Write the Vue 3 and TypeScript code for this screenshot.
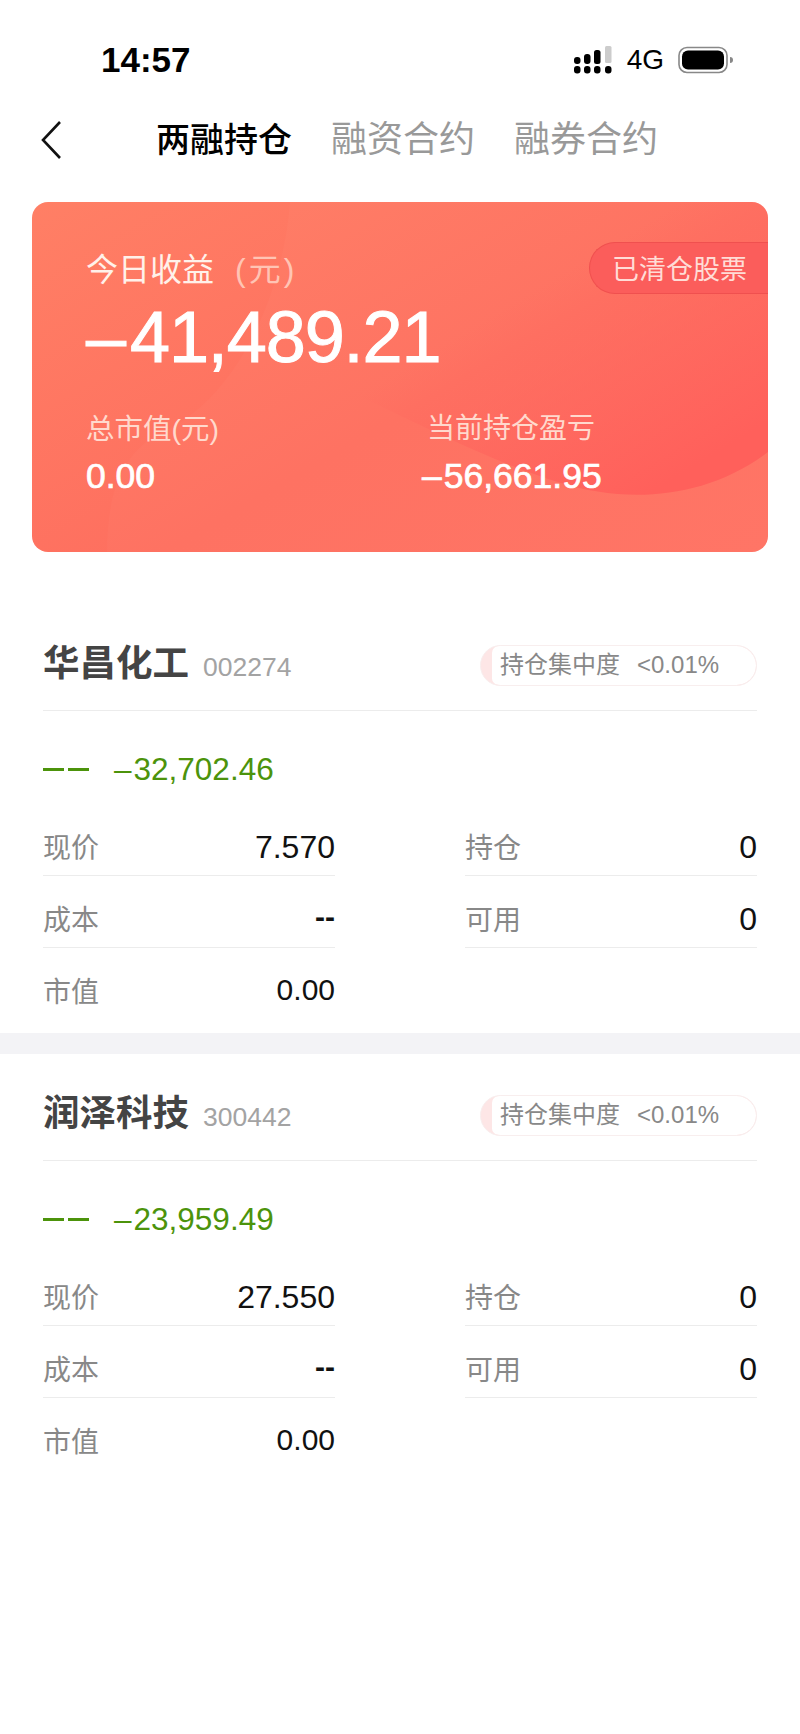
<script setup lang="ts">
interface Stock {
  name: string
  code: string
  pnl: string
  price: string
  marketValue: string
}

const tabs = ['两融持仓', '融资合约', '融券合约']

const stocks: Stock[] = [
  { name: '华昌化工', code: '002274', pnl: '32,702.46', price: '7.570', marketValue: '0.00' },
  { name: '润泽科技', code: '300442', pnl: '23,959.49', price: '27.550', marketValue: '0.00' },
]
</script>

<template>
  <div class="page">
    <div class="status-bar">
      <span class="time">14:57</span>
      <div class="status-right">
        <svg width="40" height="28" viewBox="0 0 40 28">
          <rect x="1" y="11" width="6.5" height="7" rx="3" fill="#000" />
          <rect x="11" y="8" width="6.5" height="10" rx="3" fill="#000" />
          <rect x="21" y="4" width="6.5" height="14" rx="2.5" fill="#000" />
          <rect x="32" y="0" width="6.5" height="17" rx="1.5" fill="#ccc" />
          <rect x="1" y="20" width="6.5" height="7.5" rx="3" fill="#000" />
          <rect x="11" y="20" width="6.5" height="7.5" rx="3" fill="#000" />
          <rect x="21" y="20" width="6.5" height="7.5" rx="3" fill="#000" />
          <rect x="32" y="20" width="6.5" height="7.5" rx="3" fill="#000" />
        </svg>
        <span class="net">4G</span>
        <svg width="56" height="28" viewBox="0 0 56 28">
          <rect x="1" y="1.5" width="48" height="25" rx="8" fill="none" stroke="#888" stroke-width="1.6" />
          <rect x="4" y="4.5" width="42" height="19" rx="6" fill="#000" />
          <path d="M52 11 a3 3 0 0 1 0 6z" fill="#888" />
        </svg>
      </div>
    </div>

    <div class="nav">
      <svg class="back" width="22" height="40" viewBox="0 0 22 40">
        <path d="M19 2 L2 20 L19 38" fill="none" stroke="#111" stroke-width="2.6" />
      </svg>
      <div class="tabs">
        <span v-for="(tab, i) in tabs" :key="tab" :class="['tab', { active: i === 0 }]">{{ tab }}</span>
      </div>
    </div>

    <div class="summary">
      <svg class="summary-bg" width="736" height="350" viewBox="0 0 736 350">
        <defs>
          <linearGradient id="blobFill" gradientUnits="userSpaceOnUse" x1="500" y1="90" x2="620" y2="290">
            <stop offset="0" stop-color="#ff605b" stop-opacity="0" />
            <stop offset="1" stop-color="#ff605b" />
          </linearGradient>
        </defs>
        <path d="M258 0 C250 100 200 200 130 230 C90 250 75 290 75 350 L736 350 L736 0 Z" fill="#fff" fill-opacity="0.025" />
        <path d="M270 170 C350 200 430 250 529 281 C590 300 670 300 736 250 L736 0 L300 0 Z" fill="url(#blobFill)" />
      </svg>
      <div class="cleared">已清仓股票</div>
      <div class="today-label">今日收益<span class="unit">(元)</span></div>
      <div class="today-value"><span class="sign">–</span>41,489.21</div>
      <div class="summary-row">
        <div class="summary-col">
          <div class="summary-label">总市值(元)</div>
          <div class="summary-value">0.00</div>
        </div>
        <div class="summary-col right-col">
          <div class="summary-label">当前持仓盈亏</div>
          <div class="summary-value"><span class="sign">–</span>56,661.95</div>
        </div>
      </div>
    </div>

    <section v-for="stock in stocks" :key="stock.code" class="stock">
      <div class="stock-head">
        <div class="stock-title">
          <span class="stock-name">{{ stock.name }}</span>
          <span class="stock-code">{{ stock.code }}</span>
        </div>
        <div class="badge">
          <div class="badge-inner">
            <span>持仓集中度</span>
            <span>&lt;0.01%</span>
          </div>
        </div>
      </div>
      <div class="pnl">
        <span class="pnl-dash"><i></i><i></i></span>
        <span><span class="sign">–</span>{{ stock.pnl }}</span>
      </div>
      <div class="grid">
        <div class="cell line"><span class="k">现价</span><span class="v">{{ stock.price }}</span></div>
        <div class="cell line"><span class="k">持仓</span><span class="v">0</span></div>
        <div class="cell line"><span class="k">成本</span><span class="v small dashes">--</span></div>
        <div class="cell line"><span class="k">可用</span><span class="v">0</span></div>
        <div class="cell"><span class="k">市值</span><span class="v small">{{ stock.marketValue }}</span></div>
      </div>
    </section>
  </div>
</template>

<style>
html,
body {
  margin: 0;
  background: #fff;
}
</style>

<style scoped>
.page {
  width: 800px;
  height: 1734px;
  overflow: hidden;
  background: #fff;
  font-family: "Liberation Sans", "Noto Sans CJK SC", sans-serif;
  color: #111;
}

.status-bar {
  height: 92px;
  display: flex;
  justify-content: space-between;
  align-items: center;
  padding: 28px 66px 0 101px;
  box-sizing: border-box;
}

.time {
  font-size: 35px;
  font-weight: 700;
  line-height: 32px;
  color: #000;
}

.status-right {
  display: flex;
  align-items: center;
  gap: 14px;
}

.net {
  font-size: 28px;
  color: #000;
  line-height: 28px;
}

.nav {
  height: 62px;
  margin-top: 17px;
  display: flex;
  align-items: center;
  padding-left: 41px;
}

.back {
  flex: none;
}

.tabs {
  display: flex;
  gap: 39px;
  margin-left: 93px;
}

.tab {
  font-size: 36px;
  line-height: 44px;
  color: #999;
}

.tab.active {
  font-size: 34px;
  font-weight: 500;
  color: #000;
}

.summary {
  position: relative;
  overflow: hidden;
  margin: 31px 32px 0;
  height: 350px;
  box-sizing: border-box;
  padding: 48px 54px 0;
  border-radius: 16px;
  background: linear-gradient(150deg, #ff7f65 0%, #fe6f5f 55%, #ff7263 100%);
  color: #fff;
}

.summary-bg {
  position: absolute;
  left: 0;
  top: 0;
}

.cleared {
  position: absolute;
  right: 0;
  top: 40px;
  width: 179px;
  height: 52px;
  box-sizing: border-box;
  padding-left: 22px;
  border: 1px solid #f0504f;
  border-right: 0;
  border-radius: 26px 0 0 26px;
  background: #fb5d5b;
  font-size: 27px;
  line-height: 54px;
  color: #ffdcd6;
}

.today-label {
  position: relative;
  font-size: 32px;
  line-height: 40px;
  color: #fff1ea;
}

.unit {
  margin-left: 21px;
  letter-spacing: 3px;
  color: #ffc4b4;
}

.today-value {
  position: relative;
  margin-top: 11px;
  font-size: 72px;
  line-height: 72px;
  font-weight: 500;
  -webkit-text-stroke: 1px #fff;
  letter-spacing: -1.1px;
}

.today-value .sign {
  margin-right: 5px;
}

.summary-row {
  position: relative;
  display: flex;
  margin-top: 39px;
}

.summary-col {
  flex: none;
  width: 336px;
}

.summary-label {
  font-size: 28.5px;
  line-height: 34px;
  color: #ffd9cd;
}

.right-col .summary-label {
  padding-left: 5px;
  font-size: 28px;
}

.summary-value {
  margin-top: 10px;
  font-size: 35.5px;
  line-height: 40px;
  -webkit-text-stroke: 0.7px #fff;
}

.summary-value .sign {
  margin-right: 2px;
}

.stock {
  padding: 16px 43px 13px;
  border-bottom: 21px solid #f3f3f6;
}

.summary + .stock {
  margin-top: 52px;
}

.stock:last-child {
  border-bottom: 0;
}

.stock-head {
  display: flex;
  justify-content: space-between;
  align-items: center;
  height: 91px;
  box-sizing: border-box;
  border-bottom: 1px solid #ececec;
}

.stock-title {
  display: flex;
  align-items: baseline;
  gap: 14px;
  line-height: 40px;
}

.stock-name {
  font-size: 36.5px;
  font-weight: 700;
  color: #444;
}

.stock-code {
  font-size: 26.5px;
  color: #a3a3a3;
}

.badge {
  width: 277px;
  height: 41px;
  box-sizing: border-box;
  padding-left: 11px;
  border: 1px solid #f8eeee;
  border-radius: 21px;
  background: #fde6e6;
  overflow: hidden;
}

.badge-inner {
  display: flex;
  gap: 17px;
  height: 100%;
  padding-left: 8px;
  border-radius: 7px 20px 20px 7px;
  background: #fff;
  font-size: 24px;
  line-height: 38px;
  color: #888;
}

.pnl {
  display: flex;
  align-items: center;
  gap: 25px;
  height: 32px;
  margin-top: 42px;
  font-size: 31.5px;
  color: #4c930b;
}

.pnl .sign {
  margin-right: 2px;
}

.pnl-dash {
  display: flex;
  gap: 4px;
}

.pnl-dash i {
  display: block;
  width: 21px;
  height: 3px;
  background: #4c930b;
}

.grid {
  display: grid;
  grid-template-columns: 292px 292px;
  justify-content: space-between;
  margin-top: 19px;
}

.cell {
  display: flex;
  justify-content: space-between;
  align-items: center;
  height: 72px;
  padding-top: 12px;
  box-sizing: border-box;
}

.cell.line {
  border-bottom: 1px solid #ececec;
}

.k {
  font-size: 28px;
  color: #888;
}

.v {
  margin-top: 3px;
  font-size: 32px;
  color: #111;
}

.v.small {
  margin-top: -1px;
  font-size: 30px;
}

.v.dashes {
  font-weight: 700;
}
</style>
